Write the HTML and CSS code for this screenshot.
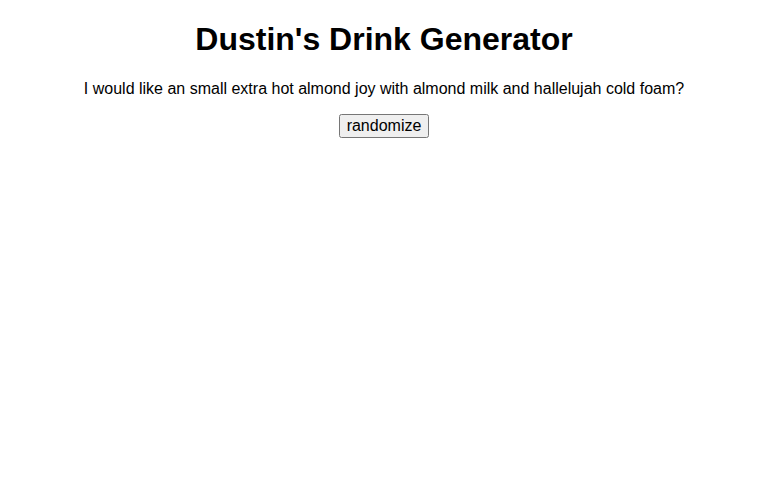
FILE: index.html
```html
<!DOCTYPE html>
<html lang="en">
<head>
  <meta charset="UTF-8">
  <meta name="viewport" content="width=device-width, initial-scale=1.0">
  <title>Dustin's Drink Generator</title>
  <link rel="stylesheet" href="styles.css">
</head>
<body>

  <div class="generator">
    <h1 class="title">Dustin's Drink Generator</h1>
    <p id="drink" class="drink">I would like an small extra hot almond joy with almond milk and hallelujah cold foam?</p>
    <button type="button" class="randomize">randomize</button>
  </div>

</body>
</html>
```

FILE: styles.css
```css
body {
  font-family: "Liberation Sans", Arial, sans-serif;
  margin: 8px;
}

.generator {
  text-align: center;
}

.title {
  font-size: 32px;
  margin: 13px 0 22px;
}

.drink {
  font-size: 16px;
  margin: 16px 0;
}

.randomize {
  font-family: "Liberation Sans", Arial, sans-serif;
  font-size: 16px;
}
```
